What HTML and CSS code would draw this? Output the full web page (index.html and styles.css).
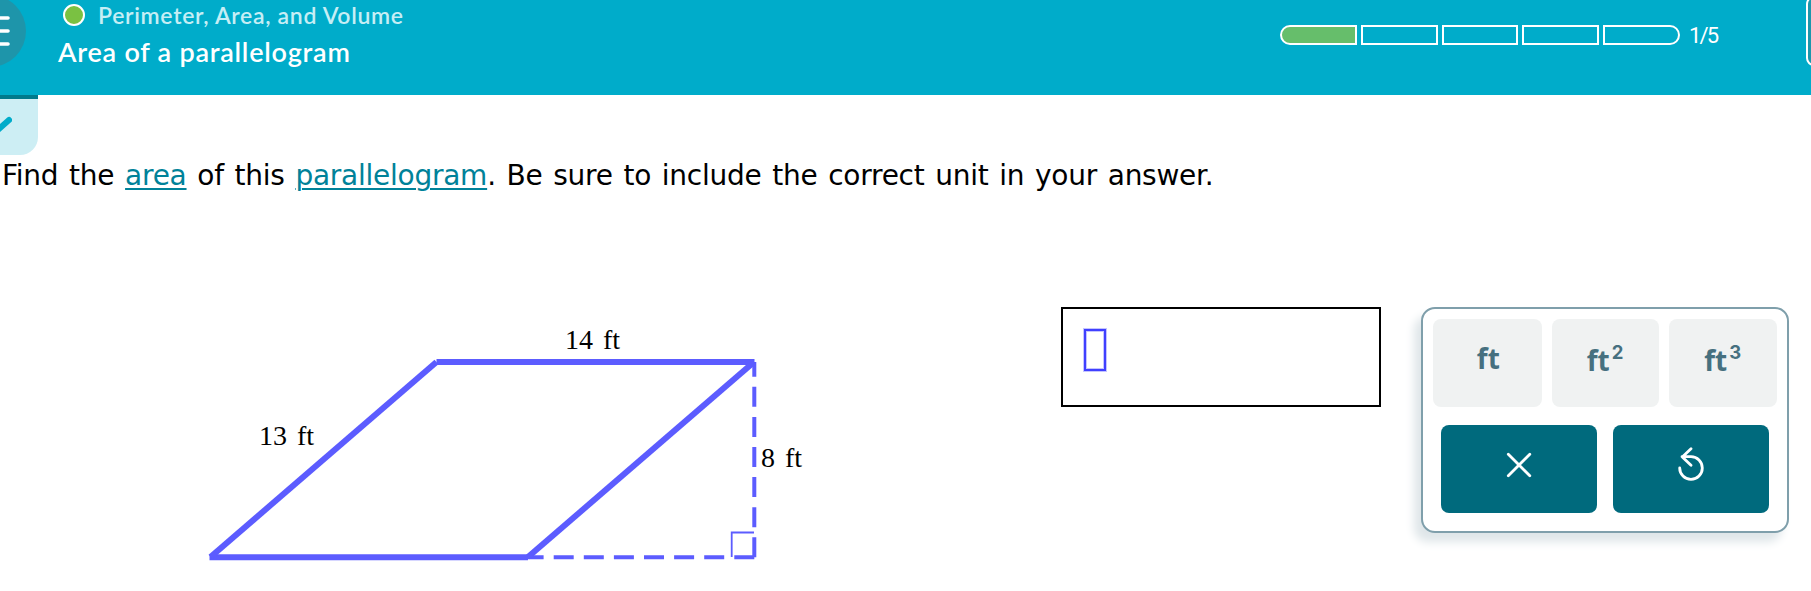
FILE: index.html
```html
<!DOCTYPE html>
<html lang="en">
<head>
    <meta charset="UTF-8">
    <meta name="viewport" content="width=device-width, initial-scale=1.0">
    <title>Area of a parallelogram</title>
    <link rel="stylesheet" href="styles.css">
</head>
<body>
    <header class="header">
        <button class="menu-btn" aria-label="Menu">
            <svg width="40" height="32" viewBox="0 0 40 32"><path d="M2 3h36M2 16h36M2 29h36"/></svg>
        </button>
        <div class="titles">
            <div class="topic"><span class="dot"></span><span class="topic-name">Perimeter, Area, and Volume</span></div>
            <h1>Area of a parallelogram</h1>
        </div>
        <div class="progress">
            <span class="seg done"></span>
            <span class="seg"></span>
            <span class="seg"></span>
            <span class="seg"></span>
            <span class="seg"></span>
        </div>
        <span class="count">1/5</span>
        <div class="user-box"></div>
    </header>

    <button class="tab" aria-label="Expand">
        <svg width="44" height="30" viewBox="0 0 44 30"><path d="M5 5l17 17L41 5"/></svg>
    </button>

    <main>
        <p class="question">Find the <a href="#">area</a> of this <a href="#">parallelogram</a>. Be sure to include the correct unit in your answer.</p>

        <div class="work">
            <!-- parallelogram with its height -->
            <svg class="figure" width="640" height="284" viewBox="200 307 640 284">
                <g class="dashed">
                    <path d="M754.3 557.3V362"/>
                    <path d="M754.3 557.3H528"/>
                </g>
                <path class="corner" d="M731.7 557V532.5H754"/>
                <g class="side">
                    <path d="M209.5 557.2H528"/>
                    <path d="M436.5 362H754.5"/>
                    <path d="M210.5 557L436.5 362"/>
                    <path d="M528 557L754 362"/>
                </g>
                <text x="259" y="445">13 ft</text>
                <text x="565" y="349">14 ft</text>
                <text x="761" y="467">8 ft</text>
            </svg>

            <div class="answer"><span class="cursor-box"></span></div>

            <div class="keypad">
                <div class="units">
                    <button class="unit">ft</button>
                    <button class="unit power">ft<sup>2</sup></button>
                    <button class="unit power">ft<sup>3</sup></button>
                </div>
                <div class="actions">
                    <button class="action" aria-label="Clear">
                        <svg width="28" height="36" viewBox="0 0 28 36"><path d="M3.3 7.3l21.5 21.5M24.8 7.3L3.3 28.8"/></svg>
                    </button>
                    <button class="action" aria-label="Undo">
                        <svg width="28" height="36" viewBox="0 0 28 36"><path d="M2.7 21A11.3 11.3 0 1 0 14 9.7H5M14 1.7L5.3 9.9L14 18.2"/></svg>
                    </button>
                </div>
            </div>
        </div>
    </main>
</body>
</html>
```

FILE: styles.css
```css
* {
    box-sizing: border-box;
}
body {
    margin: 0;
    height: 591px;
    overflow: hidden;
    background-color: #fff;
    color: #000;
}
button {
    border: none;
    padding: 0;
    font: inherit;
    cursor: pointer;
}
svg {
    display: block;
    flex: none;
}
path {
    fill: none;
}

/* top bar */
.header {
    display: flex;
    align-items: flex-start;
    height: 95px;
    overflow: hidden;
    background-color: #00acca;
    color: #fff;
    font-family: Lato, sans-serif;
}
.menu-btn {
    flex: none;
    display: flex;
    align-items: center;
    justify-content: center;
    width: 72px;
    height: 72px;
    margin: -5px 0 0 -46px;
    border-radius: 50%;
    background-color: #1e95aa;
}
.menu-btn path {
    stroke: #fff;
    stroke-width: 3.6;
    stroke-linecap: round;
}
.titles {
    flex: none;
    width: 1222px;
    margin-left: 32px;
}
.topic {
    display: flex;
    align-items: center;
    height: 30px;
    padding-left: 5px;
    color: #c6eef5;
    font-size: 23px;
    font-weight: 600;
}
.dot {
    width: 22px;
    height: 22px;
    margin-right: 13px;
    border: 2px solid #fff;
    border-radius: 50%;
    background-color: #7ac142;
}
.topic-name {
    letter-spacing: 0.68px;
}
h1 {
    margin: 6px 0 0;
    font-size: 27px;
    line-height: 32px;
    font-weight: 600;
    letter-spacing: 0.76px;
}
.progress {
    flex: none;
    display: flex;
    gap: 4px;
    width: 400px;
    margin-top: 25px;
}
.seg {
    flex: 1;
    height: 20px;
    border: 2px solid #fff;
}
.seg:first-child {
    border-radius: 10px 0 0 10px;
}
.seg:last-child {
    border-radius: 0 10px 10px 0;
}
.done {
    background-color: #66be6b;
}
.count {
    flex: none;
    width: 126px;
    padding-left: 9px;
    margin-top: 22px;
    font-family: Roboto, sans-serif;
    font-size: 22px;
    line-height: 28px;
    letter-spacing: -1.8px;
}
.user-box {
    flex: none;
    width: 60px;
    height: 70px;
    margin-top: -4px;
    border: 2px solid #fff;
    border-radius: 8px;
    background-color: #1b97ac;
}

.tab {
    display: flex;
    align-items: center;
    justify-content: flex-end;
    width: 80px;
    height: 60px;
    margin-left: -42px;
    padding: 6px 26px 0 0;
    border-top: 4px solid #007a8c;
    border-radius: 0 0 18px 18px;
    background-color: #cdeef4;
}
.tab path {
    stroke: #00acca;
    stroke-width: 6;
    stroke-linecap: round;
}

/* question */
.question {
    margin: 0;
    height: 152px;
    padding: 1px 0 0 2px;
    font-family: Verdana, "DejaVu Sans", sans-serif;
    font-size: 28px;
    line-height: 40px;
    letter-spacing: -0.25px;
    word-spacing: 2.1px;
    white-space: nowrap;
}
.question a {
    color: #008299;
    text-decoration-thickness: 2px;
    text-underline-offset: 3px;
}
.work {
    display: flex;
    align-items: flex-start;
}
.figure {
    margin-left: 200px;
}
.figure path {
    stroke: #5c5cff;
}
.side {
    stroke-width: 6;
}
.dashed {
    stroke-width: 4;
    stroke-dasharray: 20 10.1;
}
.corner {
    stroke-width: 1.8;
}
.figure text {
    font-family: "Liberation Serif", serif;
    font-size: 28px;
    word-spacing: 3px;
}
.answer {
    flex: none;
    width: 320px;
    height: 100px;
    margin-left: 221px;
    padding: 20px 21px;
    border: 2px solid #000;
}
.cursor-box {
    display: block;
    width: 22px;
    height: 42px;
    border: 2px solid #4040ff;
    box-shadow: 0 0 0 1px #c4c4ff, inset 0 0 0 1px #c4c4ff;
}

/* unit keypad */
.keypad {
    flex: none;
    width: 368px;
    height: 226px;
    margin-left: 40px;
    padding: 10px;
    border: 2px solid #7f9fab;
    border-radius: 14px;
    background-color: #fff;
    box-shadow: -7px 9px 10px #dfe6e9;
}
.units {
    display: flex;
    gap: 10px;
}
.unit {
    flex: 1;
    height: 88px;
    padding: 0 0 10px 2px;
    border-radius: 8px;
    background-color: #f0f2f2;
    color: #46707f;
    font-family: "Open Sans", sans-serif;
    font-size: 28px;
    font-weight: 700;
}
.power {
    padding: 0 1px 6px 0;
}
.unit sup {
    margin-left: 2px;
    font-family: Inter, sans-serif;
    font-size: 18.5px;
    line-height: 0;
    vertical-align: 12px;
}
.actions {
    display: flex;
    gap: 16px;
    padding: 18px 8px 0;
}
.action {
    flex: 1;
    display: flex;
    justify-content: center;
    height: 88px;
    padding-top: 22px;
    border-radius: 8px;
    background-color: #006a7d;
}
.action path {
    stroke: #fff;
    stroke-width: 2.8;
    stroke-linecap: round;
    stroke-linejoin: round;
}
```
